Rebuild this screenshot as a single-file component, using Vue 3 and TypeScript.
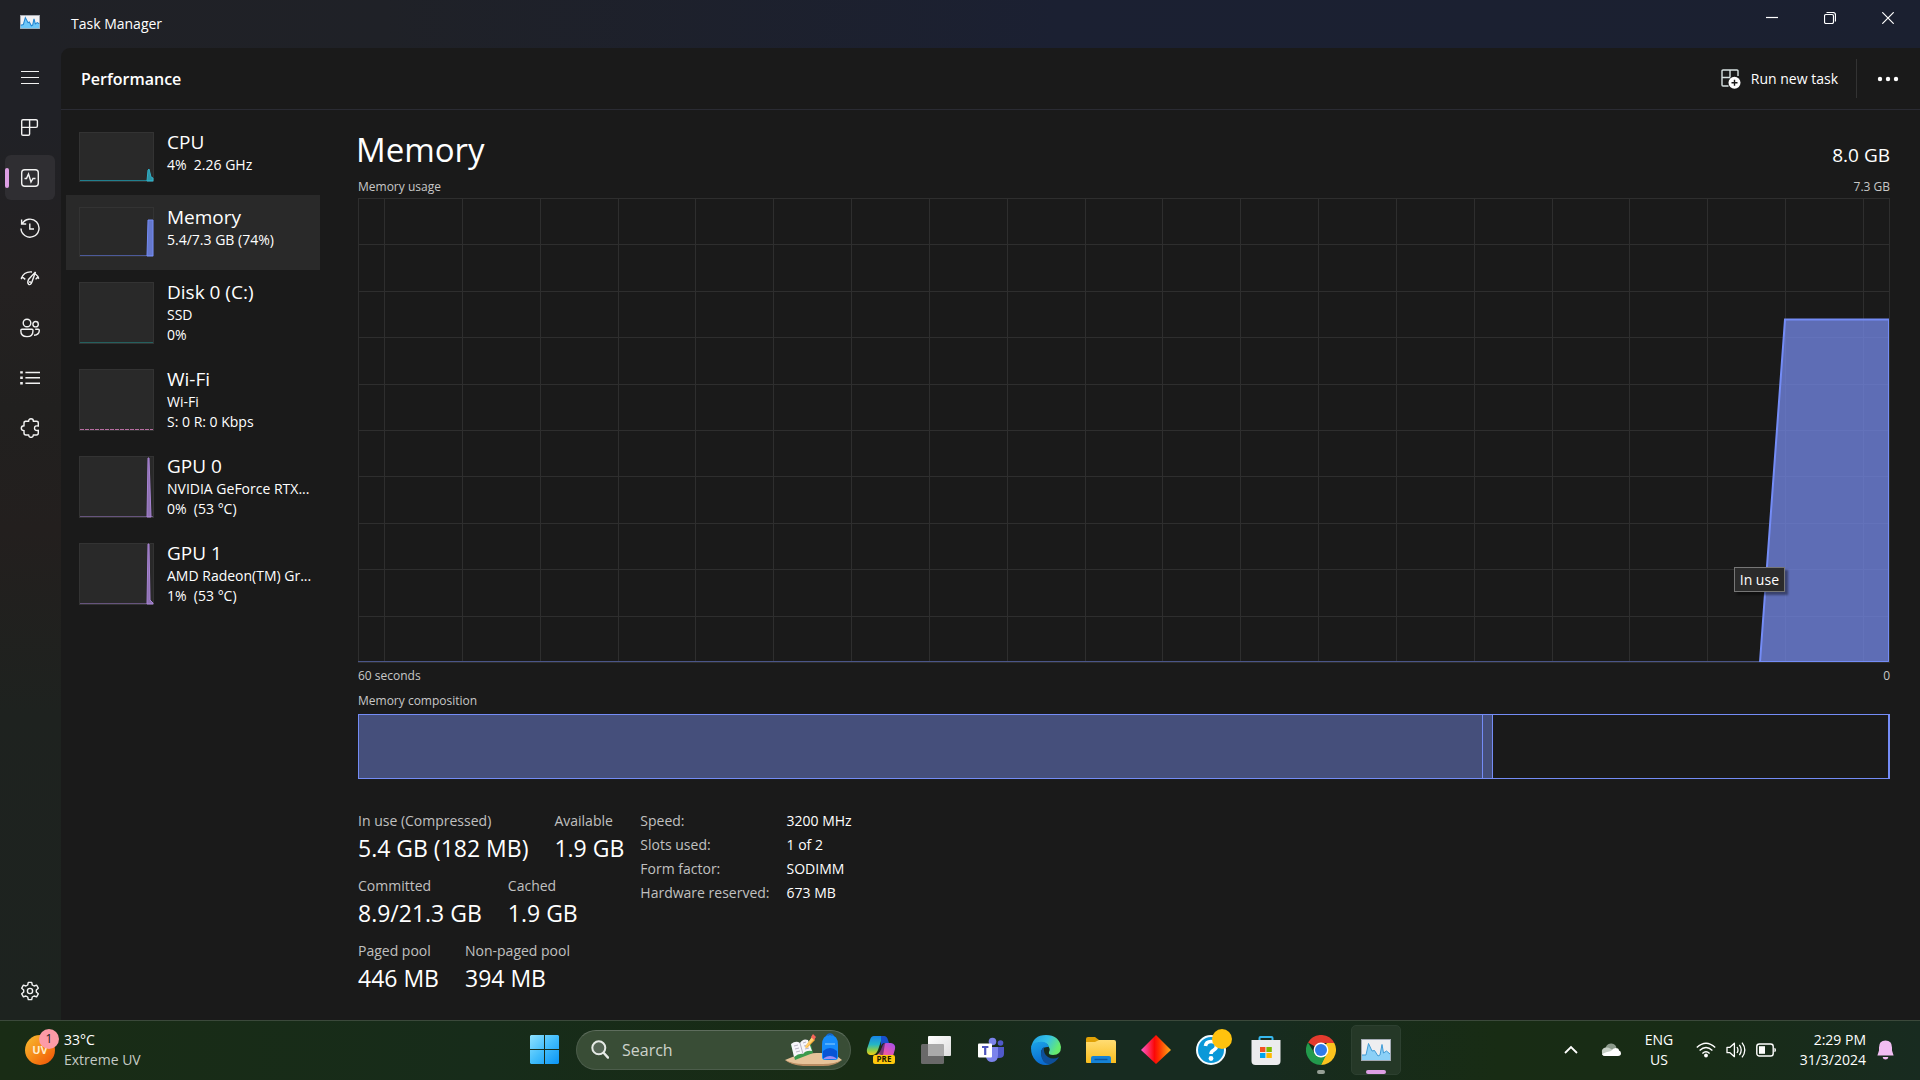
<script setup lang="ts">
import { ref } from 'vue'

interface Device {
  name: string
  lines: string[]
  tall: boolean
  stroke: string
  base: string
  shape: string
  dashed?: boolean
}

const devices: Device[] = [
  { name: 'CPU', lines: ['4%\u00a0 2.26 GHz'], tall: false, stroke: '#2fb0c7', base: '#217f8e', shape: 'M68 49 L69 38 L70 37 L72 45 L74 46 V49 Z' },
  { name: 'Memory', lines: ['5.4/7.3 GB (74%)'], tall: false, stroke: '#748cf6', base: '#4c5a99', shape: 'M68 49 L69 13 H74 V49 Z' },
  { name: 'Disk 0 (C:)', lines: ['SSD', '0%'], tall: true, stroke: '#2a6f6c', base: '#24605e', shape: '' },
  { name: 'Wi-Fi', lines: ['Wi-Fi', 'S: 0 R: 0 Kbps'], tall: true, stroke: '#c774ad', base: '#b56c9f', shape: '', dashed: true },
  { name: 'GPU 0', lines: ['NVIDIA GeForce RTX...', '0%\u00a0 (53 °C)'], tall: true, stroke: '#a884d4', base: '#66547d', shape: 'M68 61 L69 2 H70 L72 61 Z' },
  { name: 'GPU 1', lines: ['AMD Radeon(TM) Gr...', '1%\u00a0 (53 °C)'], tall: true, stroke: '#a884d4', base: '#66547d', shape: 'M68 61 L69 1 H70 L71 57 L74 60 V61 Z' },
]
const selected = ref('Memory')

const columns = Array.from({ length: 20 }, (_, i) => Math.round(26 + i * 77.84) + 0.5)
const rows = Array.from({ length: 9 }, (_, i) => Math.round((i + 1) * 46.4) + 0.5)

const stats = [
  [{ label: 'In use (Compressed)', value: '5.4 GB (182 MB)' }, { label: 'Available', value: '1.9 GB' }],
  [{ label: 'Committed', value: '8.9/21.3 GB' }, { label: 'Cached', value: '1.9 GB' }],
  [{ label: 'Paged pool', value: '446 MB' }, { label: 'Non-paged pool', value: '394 MB' }],
]

const specs = [
  ['Speed:', '3200 MHz'],
  ['Slots used:', '1 of 2'],
  ['Form factor:', 'SODIMM'],
  ['Hardware reserved:', '673 MB'],
]

const search = ref('')
</script>

<template>
  <div class="desktop">
    <div class="window">
      <header class="titlebar">
        <svg class="app-icon" width="20" height="14" viewBox="0 0 30 22" preserveAspectRatio="none" aria-hidden="true">
          <rect x="0.5" y="0.5" width="29" height="21" fill="#f1f1f3" stroke="#a7abb4" />
          <path d="M1 16 L5 15 L8 4 L12 12 L14 11 L17 17 L19 16 L21 6 L23 14 L26 12 L29 14 V21 H1 Z" fill="#6cc6f8" />
          <path d="M1 16 L5 15 L8 4 L12 12 L14 11 L17 17 L19 16 L21 6 L23 14 L26 12 L29 14" fill="none" stroke="#2385d0" stroke-width="1.6" />
        </svg>
        <span class="app-name">Task Manager</span>
        <div class="window-buttons">
          <button aria-label="Minimize"><svg width="12" height="12" viewBox="0 0 12 12"><path d="M0 5.5 H12" /></svg></button>
          <button aria-label="Restore"><svg width="12" height="12" viewBox="0 0 12 12"><rect x="0.5" y="2.5" width="9" height="9" rx="1.5" /><path d="M2.5 0.5 H9 Q11.5 0.5 11.5 3 V9.5" /></svg></button>
          <button aria-label="Close"><svg width="12" height="12" viewBox="0 0 12 12"><path d="M0.3 0.3 L11.7 11.7 M11.7 0.3 L0.3 11.7" /></svg></button>
        </div>
      </header>

      <div class="body">
        <nav class="rail" aria-label="Sections">
          <button aria-label="Open navigation">
            <svg viewBox="0 0 20 20"><path d="M1 3.5 H19 M1 9.5 H19 M1 15.5 H19" stroke-width="1" /></svg>
          </button>
          <button aria-label="Processes">
            <svg viewBox="0 0 20 20"><path d="M3 1.7 H16 Q17.4 1.7 17.4 3 V8 Q17.4 9.4 16 9.4 H9.6 V16 Q9.6 17.3 8.3 17.3 H3 Q1.7 17.3 1.7 16 V3 Q1.7 1.7 3 1.7 Z M9.6 1.7 V9.4 M1.7 9.4 H9.6" /></svg>
          </button>
          <button class="active" aria-label="Performance">
            <svg viewBox="0 0 20 20"><rect x="1.7" y="1.7" width="16.6" height="16.6" rx="3" /><path d="M4.5 10.5 H6.5 L8.5 6 L11 14 L13 10.5 H15.5" /></svg>
          </button>
          <button aria-label="App history">
            <svg viewBox="0 0 20 20"><path d="M1.6 1.6 V6 H6.2 M2 6 A9 9 0 1 1 1 10.5 M9.8 5.5 V11 H14" /></svg>
          </button>
          <button aria-label="Startup apps">
            <svg viewBox="0 0 20 20"><path d="M1 11 L2.6 9.2 L5.3 11.4 M1.2 10.6 Q4 3.2 12 4 M18.8 10.8 L17.6 9.2 L15.6 11.4 M15.4 6 Q17.8 7.6 18.8 10.6 M15.5 3.9 L8.5 11.5 Q7 14.5 8.6 16.3 Q10.8 17.5 12 13.8 Z M10 13 V15" /></svg>
          </button>
          <button aria-label="Users">
            <svg viewBox="0 0 20 20"><circle cx="7" cy="5" r="3.8" /><circle cx="15.6" cy="6.2" r="2.7" /><path d="M2 11.2 H12 Q13 11.2 13 12.4 Q13 18.6 7 18.6 Q0.8 18.6 0.8 12.4 Q0.8 11.2 2 11.2 Z M15.2 11.2 H18.2 Q19.3 11.2 19.3 12.6 Q19 17 14 17.2" /></svg>
          </button>
          <button aria-label="Details">
            <svg viewBox="0 0 20 20"><path d="M5.4 4.5 H20 M5.4 9.8 H20 M5.4 15.3 H20" /><path d="M1.5 3.2 V5.6 M1.5 8.6 V11 M1.5 14.1 V16.5" stroke-width="2.6" /></svg>
          </button>
          <button aria-label="Services">
            <svg viewBox="0 0 20 20"><path d="M5 3.3 H8.6 Q8.6 0.8 11 0.8 Q13.4 0.8 13.4 3.3 H16.4 Q18.3 3.3 18.3 5 V8 Q14.5 7.3 14.5 10.2 Q14.5 13 18.3 12.4 V15 Q18.3 17 16.4 17 H13.4 Q13.2 19.4 11 19.4 Q8.8 19.4 8.6 17 H6 Q4 17 4 15 V12.6 Q1.3 12.4 1.3 10.2 Q1.3 7.9 4 7.8 V5 Q4 3.3 6 3.3 Z" /></svg>
          </button>
          <button class="settings" aria-label="Settings">
            <svg viewBox="0 0 20 20"><circle cx="10" cy="10" r="2.6" /><path d="M8.3 1.4 H11.7 L12.3 4 L14.1 5 L16.6 4.2 L18.3 7.2 L16.3 9 V11 L18.3 12.8 L16.6 15.8 L14.1 15 L12.3 16 L11.7 18.6 H8.3 L7.7 16 L5.9 15 L3.4 15.8 L1.7 12.8 L3.7 11 V9 L1.7 7.2 L3.4 4.2 L5.9 5 L7.7 4 Z" stroke-linejoin="round" /></svg>
          </button>
        </nav>

        <div class="panel">
          <div class="toolbar">
            <h1>Performance</h1>
            <button class="run-task">
              <svg width="20" height="20" viewBox="0 0 20 20" aria-hidden="true">
                <path d="M17 7 V2 Q17 1 16 1 H2 Q1 1 1 2 V16 Q1 17 2 17 H7.5 M9 1 V8.5 M1 8.5 H9" fill="none" stroke="#d8e2e2" stroke-width="1.4" />
                <circle cx="13.5" cy="13.8" r="6" fill="#fff" />
                <path d="M13.5 10.8 V16.8 M10.5 13.8 H16.5" stroke="#1a1a1a" stroke-width="1.4" />
              </svg>
              Run new task
            </button>
            <span class="divider"></span>
            <button class="more" aria-label="More options">
              <svg width="22" height="6" viewBox="0 0 22 6"><circle cx="3" cy="3" r="2.2" /><circle cx="11" cy="3" r="2.2" /><circle cx="19" cy="3" r="2.2" /></svg>
            </button>
          </div>

          <div class="content">
            <aside class="devices">
              <button
                v-for="d in devices"
                :key="d.name"
                class="device"
                :class="{ chosen: selected === d.name }"
                @click="selected = d.name"
              >
                <svg class="thumb" width="75" :height="d.tall ? 62 : 50" aria-hidden="true">
                  <rect x="0.5" y="0.5" width="74" :height="d.tall ? 61 : 49" fill="#292929" stroke="#333" />
                  <path :d="`M1 ${d.tall ? 60.5 : 48.5} H74`" :stroke="d.base" :stroke-dasharray="d.dashed ? '4 1' : undefined" />
                  <path v-if="d.shape" :d="d.shape" :fill="d.stroke" fill-opacity="0.8" :stroke="d.stroke" />
                </svg>
                <span class="device-text">
                  <span class="device-name">{{ d.name }}</span>
                  <span v-for="line in d.lines" :key="line" class="device-line">{{ line }}</span>
                </span>
              </button>
            </aside>

            <main class="details">
              <div class="headline">
                <h2>Memory</h2>
                <span class="total">8.0 GB</span>
              </div>
              <div class="caption top"><span>Memory usage</span><span>7.3 GB</span></div>
              <div class="chart">
                <svg viewBox="0 0 1532 465" preserveAspectRatio="none" aria-label="Memory usage over 60 seconds">
                  <g class="grid">
                    <path v-for="x in columns" :key="'c' + x" :d="`M${x} 0 V465`" />
                    <path v-for="y in rows" :key="'r' + y" :d="`M0 ${y} H1532`" />
                    <path d="M0.5 0.5 H1531.5 V464.5 H0.5 Z" />
                  </g>
                  <path class="baseline" d="M0 463.5 H1402" />
                  <path class="area" d="M1402 464 L1427 121.5 H1531 V464 Z" />
                  <path class="line" d="M1402 464 L1427 121.5 H1531" />
                  <path class="edge" d="M1530.5 121 V463.5 H1402" />
                </svg>
                <div class="tooltip" role="tooltip">In use</div>
              </div>
              <div class="caption"><span>60 seconds</span><span>0</span></div>
              <div class="caption"><span>Memory composition</span></div>
              <div class="composition">
                <div class="used"></div>
                <div class="modified"></div>
                <div class="standby"></div>
                <div class="free"></div>
              </div>

              <div class="figures">
                <div class="stats">
                  <div v-for="(row, i) in stats" :key="i" class="stat-row">
                    <div v-for="s in row" :key="s.label" class="stat">
                      <span class="stat-label">{{ s.label }}</span>
                      <span class="stat-value">{{ s.value }}</span>
                    </div>
                  </div>
                </div>
                <table class="specs">
                  <tbody>
                    <tr v-for="s in specs" :key="s[0]">
                      <th scope="row">{{ s[0] }}</th>
                      <td>{{ s[1] }}</td>
                    </tr>
                  </tbody>
                </table>
              </div>
            </main>
          </div>
        </div>
      </div>
    </div>

    <footer class="taskbar">
      <button class="weather">
        <span class="uv">UV<span class="badge">1</span></span>
        <span class="weather-text"><span>33°C</span><span class="dim">Extreme UV</span></span>
      </button>

      <div class="apps">
        <button class="app" aria-label="Start">
          <svg width="29" height="29" viewBox="0 0 29 29">
            <defs><linearGradient id="win" x1="0" y1="0" x2="1" y2="1"><stop offset="0" stop-color="#8fe3ff" /><stop offset="0.5" stop-color="#42bdfb" /><stop offset="1" stop-color="#0a94f5" /></linearGradient></defs>
            <path d="M1 0 H14 V14 H0 V1 Z M15 0 H28 L29 1 V14 H15 Z M0 15 H14 V29 H1 L0 28 Z M15 15 H29 V28 L28 29 H15 Z" fill="url(#win)" />
          </svg>
        </button>

        <label class="search">
          <svg width="18" height="19" viewBox="0 0 18 19" aria-hidden="true"><circle cx="7.8" cy="7.8" r="6.5" fill="#566656" stroke="#e6eae6" stroke-width="2" /><path d="M12.6 12.8 L17 17.6" stroke="#e6eae6" stroke-width="2.4" stroke-linecap="round" /></svg>
          <input v-model="search" type="text" placeholder="Search" aria-label="Search" />
          <svg class="doodle" width="58" height="34" viewBox="0 0 58 34" aria-hidden="true">
            <path d="M0 27 Q16 19 36 20 Q52 21 57 27 Q50 32 38 32 H18 Q7 32 0 27 Z" fill="#e6c39a" />
            <path d="M0 27 Q8 31 18 31 H38 Q50 31 57 27 Q50 33 38 33 H18 Q6 32 0 27 Z" fill="#b98c62" />
            <path d="M6 12 L25 8 L28 20 L10 27 Z" fill="#3b9a4d" />
            <path d="M6 11 Q11 7 15 10 Q18 5 23 7 L27 18 Q21 17 18 21 Q14 20 9 24 Z" fill="#f7f5fa" />
            <path d="M15 10 L18 21 M9 13 L13 12 M10 16 L14 15 M11 19 L15 18 M18 10 L21 9 M19 13 L23 12 M20 16 L24 15" stroke="#a8a3b5" stroke-width="0.8" />
            <path d="M20 14 L27 4 L30 7 L22 15 Z" fill="#fbb03a" /><path d="M27 4 L29 6 L21 15 L20 14 Z" fill="#ffcf70" /><path d="M26 4 L28 1 L31 4 L29 7 Z" fill="#f4655a" />
            <path d="M41 7 Q41 1 45 1 Q49 1 49 7" fill="none" stroke="#1166d8" stroke-width="1.4" />
            <path d="M37 12 Q37 2 45 2 Q53 2 53 12 V24 Q53 27 50 27 H40 Q37 27 37 24 Z" fill="#168bfa" />
            <path d="M38 18 Q45 12 52 18 V25 Q45 28 38 25 Z" fill="#0754d6" /><path d="M39 25 Q45 21 51 25 V26 H39 Z" fill="#9a8cf4" />
            <path d="M40 11 H50" stroke="#8fd0ff" />
          </svg>
        </label>

        <button class="app" aria-label="Copilot preview">
          <svg width="30" height="30" viewBox="0 0 30 30">
            <defs>
              <linearGradient id="cpa" x1="0" y1="0" x2="0" y2="1"><stop offset="0" stop-color="#1784e8" /><stop offset="0.45" stop-color="#25b6c4" /><stop offset="0.75" stop-color="#8ccc48" /><stop offset="1" stop-color="#f8cd13" /></linearGradient>
              <linearGradient id="cpb" x1="1" y1="0" x2="0" y2="1"><stop offset="0" stop-color="#a34ff0" /><stop offset="0.6" stop-color="#e756ad" /><stop offset="1" stop-color="#ff8a5c" /></linearGradient>
            </defs>
            <path d="M8 1 H19 Q16 2 15 6 L12 15 Q10 20 6 20 H4 Q0 19 1 14 L4 5 Q5 1 8 1 Z" fill="url(#cpa)" />
            <path d="M15 1 H18 Q21 1 22 5 L23 8 H19 Q16 8 15 11 Z" fill="#1750cd" />
            <path d="M20 8 H25 Q30 9 29 14 L27 21 H8 Q13 20 15 15 L17 10 Q18 8 20 8 Z" fill="url(#cpb)" />
            <path d="M17 9 L13 19 L17 21 L19 8 Z" fill="#321c52" opacity="0.6" />
            <rect x="7" y="20" width="22" height="9" rx="2" fill="#ffc80d" />
            <text x="18" y="27" font-size="8" font-weight="700" text-anchor="middle" fill="#1d1a00">PRE</text>
          </svg>
        </button>
        <button class="app" aria-label="Task view">
          <svg width="30" height="30" viewBox="0 0 30 30">
            <defs><linearGradient id="tv" x1="0" y1="0" x2="1" y2="1"><stop offset="0" stop-color="#fff" /><stop offset="1" stop-color="#dedede" /></linearGradient></defs>
            <rect x="0" y="9" width="23" height="20" rx="1.5" fill="#696969" /><rect x="7" y="1" width="23" height="20" rx="1" fill="url(#tv)" /><path d="M7 9 H22 Q23 9 23 10 V21 H8 Q7 21 7 20 Z" fill="#aaa" />
          </svg>
        </button>
        <button class="app" aria-label="Teams">
          <svg width="30" height="30" viewBox="0 0 30 30">
            <circle cx="24.5" cy="8" r="2.8" fill="#5059c9" /><path d="M19 12 H28 V19 Q28 23 23 23 H19 Z" fill="#5059c9" />
            <circle cx="16.5" cy="6.5" r="3.8" fill="#7b83eb" /><path d="M9 12 H22 V20 Q22 27 16 27 Q11 27 10 22 Z" fill="#7b83eb" />
            <rect x="2" y="8.5" width="14" height="14" rx="1" fill="#fff" /><path d="M6 12 H12.4 M9.2 12 V20" stroke="#4b53bc" stroke-width="2.2" />
          </svg>
        </button>
        <button class="app" aria-label="Edge">
          <svg width="30" height="30" viewBox="0 0 30 30">
            <defs>
              <linearGradient id="eda" x1="0" y1="0" x2="1" y2="0.4"><stop offset="0" stop-color="#1b9de2" /><stop offset="0.55" stop-color="#35c1e8" /><stop offset="1" stop-color="#66eb6e" /></linearGradient>
              <linearGradient id="edb" x1="0" y1="0" x2="0.3" y2="1"><stop offset="0" stop-color="#1ba3e8" /><stop offset="1" stop-color="#0a6cd0" /></linearGradient>
            </defs>
            <path d="M0 13 Q2 0 15 0 Q28 0 30 12 Q30 20 22 20 Q17 20 18 17 Q20 14 16 9 Q8 4 0 13 Z" fill="url(#eda)" />
            <path d="M0 13 Q1 7 8 7 Q16 6 18 12 Q10 11 10 18 Q11 29 20 29 Q11 32 5 26 Q0 21 0 13 Z" fill="url(#edb)" />
            <path d="M13 12 Q10 14 10 19 Q11 30 20 29 Q25 27 28 22 Q22 25 17 22 Q12 19 13 12 Z" fill="#0e4f9a" />
          </svg>
        </button>
        <button class="app" aria-label="File Explorer">
          <svg width="30" height="30" viewBox="0 0 30 30">
            <defs><linearGradient id="fe" x1="0" y1="0" x2="0" y2="1"><stop offset="0" stop-color="#ffdc73" /><stop offset="1" stop-color="#f9bd1d" /></linearGradient></defs>
            <path d="M0 4 Q0 2 2 2 H9 L13 5 V10 H0 Z" fill="#e0a106" /><path d="M0 7 H9 L13 5 H28 Q30 5 30 7 V28 H1 Q0 28 0 27 Z" fill="url(#fe)" />
            <path d="M5 28 V23 Q5 21 7 21 H23 Q25 21 25 23 V28 Z" fill="#1683d6" /><path d="M8.5 24.5 H21.5" stroke="#0a56a0" stroke-width="1.4" />
          </svg>
        </button>
        <button class="app" aria-label="Diamond">
          <svg width="30" height="30" viewBox="0 0 30 30">
            <defs><linearGradient id="dm" x1="0" y1="0" x2="1" y2="0"><stop offset="0" stop-color="#ff5ad0" /><stop offset="0.45" stop-color="#fb0808" /><stop offset="0.6" stop-color="#ff2f00" /><stop offset="1" stop-color="#ffae19" /></linearGradient></defs>
            <path d="M15 0 L30 15 L15 29 L0 15 Z" fill="url(#dm)" />
          </svg>
        </button>
        <button class="app" aria-label="Get Help">
          <svg width="30" height="30" viewBox="0 0 30 30">
            <circle cx="15" cy="15" r="14" fill="#0a98d8" stroke="#f4fbff" stroke-width="2" />
            <path d="M9.5 11 Q10 6.5 15 6.5 Q20.5 6.5 20.5 11 Q20.5 13.5 17.5 15.3 Q15 16.5 15 19" fill="none" stroke="#fff" stroke-width="3.6" /><circle cx="15" cy="23.5" r="2.4" fill="#fff" />
          </svg>
          <span class="alert"></span>
        </button>
        <button class="app" aria-label="Store">
          <svg width="30" height="30" viewBox="0 0 30 30">
            <path d="M8.5 6 V3 Q8.5 2 9.5 2 H20.5 Q21.5 2 21.5 3 V6" fill="none" stroke="#36b8ee" stroke-width="2" />
            <path d="M0.5 5 H29.5 V26 Q29.5 30 25.5 30 H4.5 Q0.5 30 0.5 26 Z" fill="#ececee" />
            <rect x="9" y="12" width="5.4" height="5" fill="#f25022" /><rect x="15.4" y="12" width="5.4" height="5" fill="#7fba00" /><rect x="9" y="18" width="5.4" height="5" fill="#00a4ef" /><rect x="15.4" y="18" width="5.4" height="5" fill="#ffb900" />
          </svg>
        </button>
        <button class="app running" aria-label="Chrome">
          <svg width="30" height="30" viewBox="0 0 30 30">
            <path d="M15 15 L2 7.5 A15 15 0 0 1 28.3 8 H15 Z" fill="#e33b2e" /><path d="M15 15 L21 8 H28.3 A15 15 0 0 1 15 30 L20 19 Z" fill="#fcc31e" /><path d="M15 15 L21 18.5 L15 30 A15 15 0 0 1 2 7.5 L9 19 Z" fill="#229a4c" />
            <circle cx="15" cy="15" r="7.4" fill="#fff" /><circle cx="15" cy="15" r="6" fill="#2f7bea" />
          </svg>
        </button>
        <button class="app current" aria-label="Task Manager">
          <svg width="30" height="22" viewBox="0 0 30 22">
            <rect x="0.5" y="0.5" width="29" height="21" fill="#eeeef0" stroke="#a4aab4" /><path d="M1 16 L5 16 L7.5 4.5 L11 12 L13.5 11.5 L17 17 L19 16 L21 5.5 L22.5 14 L25.5 12 L29 15 V21 H1 Z" fill="#8bd0f7" />
            <path d="M1 16 L5 16 L7.5 4.5 L11 12 L13.5 11.5 L17 17 L19 16 L21 5.5 L22.5 14 L25.5 12 L29 15" fill="none" stroke="#3f9bd6" />
          </svg>
        </button>
      </div>

      <div class="tray">
        <button class="chevron" aria-label="Show hidden icons"><svg width="14" height="9" viewBox="0 0 14 9"><path d="M1 8 L7 2 L13 8" fill="none" stroke="#fff" stroke-width="1.8" /></svg></button>
        <button class="cloud" aria-label="OneDrive">
          <svg width="20" height="14" viewBox="0 0 20 14"><path d="M4 7 Q5 0 10.5 0.5 Q15 1 15.5 5 L10 10 Z" fill="#8b998b" /><path d="M1 10 Q0 5 5 4.5 Q9 4 14 9 L8 13 H4 Q1 12.6 1 10 Z" fill="#c6cfc6" /><path d="M1 11 Q5 9 10 8 Q13 3.5 17 5.5 Q18 6.4 18 7.5 Q20 8 20 10.3 Q20 13 17 13 H4 Q1.5 13 1 11 Z" fill="#fff" /></svg>
        </button>
        <button class="lang"><span>ENG</span><span>US</span></button>
        <button class="status" aria-label="Network, volume and battery">
          <svg width="20" height="16" viewBox="0 0 20 16"><path d="M0.8 5.6 Q10 -3 19.2 5.6 M3.6 8.6 Q10 2.4 16.4 8.6 M6.4 11.4 Q10 8 13.6 11.4" fill="none" stroke="#fff" stroke-width="1.4" /><circle cx="10" cy="13.5" r="1.9" fill="#fff" /></svg>
          <svg width="20" height="16" viewBox="0 0 20 16"><path d="M1 5.3 H4 L8.4 1.3 V14.7 L4 10.7 H1 Z M11 5 Q13 8 11 11 M13.4 2.8 Q17 8 13.4 13.2 M16 0.6 Q21.6 8 16 15.4" fill="none" stroke="#fff" stroke-width="1.3" stroke-linejoin="round" /></svg>
          <svg width="20" height="16" viewBox="0 0 20 16"><rect x="0.8" y="2" width="16.4" height="12" rx="2.6" fill="none" stroke="#fff" stroke-width="1.4" /><rect x="3" y="4.2" width="6" height="7.6" fill="#fff" /><path d="M18.4 5.8 Q20 6 20 8 Q20 10 18.4 10.2 Z" fill="#fff" /></svg>
        </button>
        <button class="clock"><span>2:29 PM</span><span>31/3/2024</span></button>
        <button class="bell" aria-label="Notifications"><svg width="17" height="20" viewBox="0 0 17 20"><path d="M8.5 0.5 Q15 0.5 15 7.5 V10.5 L16.6 15.5 H0.4 L2 10.5 V7.5 Q2 0.5 8.5 0.5 Z M5.6 17 H11.4 Q11 19.5 8.5 19.5 Q6 19.5 5.6 17 Z" fill="#f1bdf2" /></svg></button>
      </div>
    </footer>
  </div>
</template>

<style>
body {
  margin: 0;
  background: #1a1a1a;
}
</style>

<style scoped>
.desktop {
  box-sizing: border-box;
  display: flex;
  flex-direction: column;
  min-height: 100vh;
  font-family: "Open Sans", "Noto Sans", sans-serif;
  font-size: 14px;
  color: #fff;
}
button {
  margin: 0;
  padding: 0;
  border: 0;
  background: none;
  color: inherit;
  font: inherit;
  text-align: left;
}
svg {
  display: block;
  flex: none;
}
h1,
h2 {
  margin: 0;
}

.window {
  flex: 1;
  display: flex;
  flex-direction: column;
  background: linear-gradient(180deg, #202126 0%, #202126 12%, #242121 28%, #21201f 40%, #231f1e 52%, #1e221f 70%, #1d231f 100%);
}
.titlebar {
  display: flex;
  align-items: center;
  height: 46px;
  padding: 0 3px 2px 20px;
  background: linear-gradient(90deg, #202126, #1f2127 20%, #1b2032 55%, #1b2030);
}
.app-icon {
  margin-bottom: 2px;
}
.app-name {
  flex: 1;
  margin-left: 31px;
}
.window-buttons {
  display: flex;
  align-self: flex-start;
}
.window-buttons button {
  display: grid;
  place-items: center;
  width: 58px;
  height: 36px;
}
.window-buttons svg {
  fill: none;
  stroke: #fff;
  stroke-width: 1.2;
}

.body {
  flex: 1;
  display: flex;
}
.rail {
  box-sizing: border-box;
  display: flex;
  flex-direction: column;
  gap: 5px;
  width: 61px;
  padding: 7px 6px 7px 5px;
}
.rail button {
  position: relative;
  display: grid;
  place-items: center;
  height: 45px;
  border-radius: 6px;
}
.rail svg {
  width: 20px;
  height: 20px;
  fill: none;
  stroke: #f2f2f2;
  stroke-width: 1.4;
}
.rail .active {
  background: #2f2e32;
}
.rail .active::before {
  content: "";
  position: absolute;
  left: 0;
  top: 13px;
  width: 4px;
  height: 20px;
  border-radius: 2px;
  background: #dd9fe4;
}
.rail .settings {
  margin-top: auto;
}

.panel {
  flex: 1;
  min-width: 0;
  display: flex;
  flex-direction: column;
  border-top-left-radius: 9px;
  background: #1a1a1a;
}
.toolbar {
  display: flex;
  align-items: center;
  height: 61px;
  padding: 0 21px 0 20px;
  border-bottom: 1px solid #2a2b33;
}
.toolbar h1 {
  flex: 1;
  font-size: 16px;
  font-weight: 600;
  line-height: 24px;
}
.run-task {
  display: flex;
  align-items: center;
  gap: 10px;
}
.divider {
  width: 1px;
  height: 39px;
  margin: 0 20px 0 18px;
  background: #333;
}
.more svg {
  fill: #fff;
}

.content {
  flex: 1;
  display: flex;
}
.devices {
  display: flex;
  flex-direction: column;
  width: 254px;
  padding: 10px 0 0 5px;
}
.device {
  display: flex;
  align-items: flex-start;
  gap: 13px;
  padding: 12px 0 13px 13px;
}
.device.chosen {
  background: #292929;
}
.device-text {
  flex: 1;
  min-width: 0;
  display: flex;
  flex-direction: column;
  margin: -3px 0;
}
.device-name {
  font-size: 19px;
  line-height: 26px;
}
.device-line {
  line-height: 20px;
  white-space: nowrap;
}

.details {
  flex: 1;
  min-width: 0;
  display: flex;
  flex-direction: column;
  padding: 16px 30px 25px 38px;
}
.headline {
  display: flex;
  align-items: baseline;
  justify-content: space-between;
  height: 50px;
  line-height: 48px;
}
.headline h2 {
  margin-left: -2px;
  font-size: 33px;
  font-weight: 400;
}
.total {
  font-size: 19px;
}
.caption {
  display: flex;
  justify-content: space-between;
  color: #c8c8c8;
  font-size: 12px;
  line-height: 25px;
}
.caption.top {
  line-height: 22px;
}
.chart {
  position: relative;
  flex: 1;
  min-height: 240px;
}
.chart > svg {
  position: absolute;
  width: 100%;
  height: 100%;
}
.chart path {
  fill: none;
  vector-effect: non-scaling-stroke;
}
.grid path {
  stroke: #2e2e2e;
  shape-rendering: crispEdges;
}
.chart .baseline {
  stroke: #4a5588;
}
.chart .area {
  fill: #768aea;
  fill-opacity: 0.75;
}
.chart .line {
  stroke: #748cf6;
  stroke-width: 2;
}
.chart .edge {
  stroke: #748cf6;
}
.tooltip {
  position: absolute;
  left: 89.8%;
  top: 79.4%;
  padding: 0 5px;
  border: 1px solid #767676;
  background: #2b2b2b;
  box-shadow: 3px 3px 2px rgba(0, 0, 0, 0.4);
  line-height: 23px;
}
.composition {
  display: flex;
  height: 63px;
  margin-top: 1px;
  border: 1px solid #748cf6;
}
.used {
  flex: 1124;
  background: #454f7b;
}
.modified {
  flex: 9;
  border: solid #748cf6;
  border-width: 0 1px;
  background: #454f7b;
}
.standby {
  flex: 395;
}
.free {
  width: 1px;
  background: #748cf6;
}

.figures {
  display: flex;
  gap: 16px;
  margin-top: 31px;
}
.stats {
  display: flex;
  flex-direction: column;
  gap: 10px;
}
.stat-row {
  display: flex;
  gap: 26px;
}
.stat {
  display: flex;
  flex-direction: column;
}
.stat-label {
  color: #c0c0c0;
  line-height: 22px;
}
.stat-value {
  font-size: 23px;
  line-height: 33px;
}
.specs {
  align-self: flex-start;
  margin-top: -1px;
  border-collapse: collapse;
}
.specs th,
.specs td {
  padding: 0;
  line-height: 24px;
}
.specs th {
  padding-right: 17px;
  color: #c0c0c0;
  font-weight: 400;
  text-align: left;
}

.taskbar {
  display: grid;
  grid-template-columns: 1fr auto 1fr;
  align-items: center;
  height: 57px;
  padding-bottom: 2px;
  border-top: 1px solid #3b493b;
  background: linear-gradient(90deg, #192c15 0%, #172c1a 25%, #182b14 45%, #172b20 57%, #172b20 65%, #182c14 78%, #182c16 88%, #182b20 100%);
}
.taskbar button {
  line-height: 20px;
}
.weather {
  display: flex;
  align-items: center;
  justify-self: start;
  gap: 9px;
  padding-left: 25px;
}
.uv {
  position: relative;
  width: 30px;
  height: 30px;
  border-radius: 50%;
  background: linear-gradient(135deg, #f7b32d 10%, #f58414 55%, #f2600c 85%);
  color: #ffecc9;
  font-size: 11px;
  font-weight: 700;
  line-height: 30px;
  text-align: center;
}
.badge {
  position: absolute;
  right: -4px;
  top: -6px;
  width: 20px;
  height: 20px;
  border-radius: 50%;
  background: #fd9ba6;
  color: #222;
  font-size: 12px;
  font-weight: 400;
  line-height: 20px;
}
.weather-text,
.lang,
.clock {
  display: flex;
  flex-direction: column;
}
.dim {
  color: #c5cbc5;
}
.apps {
  display: flex;
  align-items: center;
  gap: 5px;
}
.app {
  position: relative;
  box-sizing: border-box;
  display: grid;
  place-items: center;
  width: 50px;
  height: 50px;
  border-radius: 5px;
}
.app text {
  font-family: "Open Sans", sans-serif;
}
.app.current {
  border: 1px solid #2d4030;
  background: #253827;
}
.app.running::after,
.app.current::after {
  content: "";
  position: absolute;
  bottom: 1px;
  width: 8px;
  height: 4px;
  border-radius: 2px;
  background: #96a096;
}
.app.current::after {
  bottom: 0;
  width: 20px;
  background: #dd9fe4;
}
.alert {
  position: absolute;
  right: 4px;
  top: 4px;
  width: 20px;
  height: 20px;
  border-radius: 50%;
  background: #ffc20e;
}
.search {
  box-sizing: border-box;
  display: flex;
  align-items: center;
  width: 275px;
  height: 40px;
  margin-left: 2px;
  padding: 0 7px 0 14px;
  border: 1px solid #4c5d4b;
  border-top-color: #5e6d5d;
  border-radius: 20px;
  background: #394d36;
}
.search input {
  flex: 1;
  min-width: 0;
  padding: 0 0 0 13px;
  border: 0;
  outline: 0;
  background: none;
  color: #fff;
  font: inherit;
  font-size: 16px;
}
.search input::placeholder {
  color: #cdd3cc;
  opacity: 1;
}
.tray {
  display: flex;
  align-items: center;
  justify-self: end;
  padding-right: 26px;
}
.cloud {
  margin-left: 23px;
}
.lang {
  align-items: center;
  width: 30px;
  margin-left: 23px;
}
.status {
  display: flex;
  gap: 10px;
  margin-left: 22px;
}
.clock {
  align-items: flex-end;
  width: 70px;
  margin-left: 20px;
}
.bell {
  margin-left: 11px;
}
</style>
